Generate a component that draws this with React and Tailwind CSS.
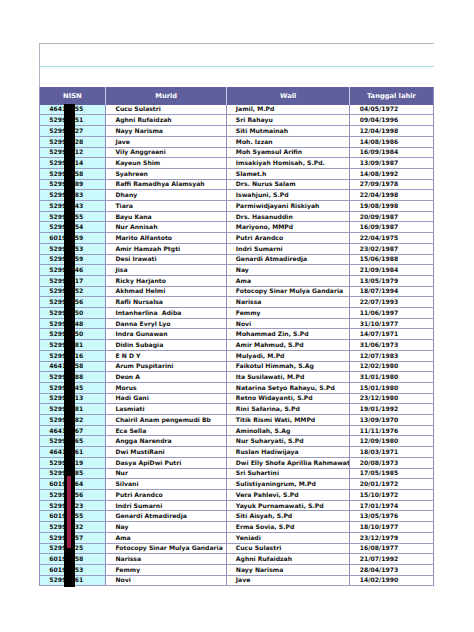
import React from "react";

const rows = [
  ["4641", "55", "Cucu Sulastri", "Jamil, M.Pd", "04/05/1972"],
  ["5299", "51", "Aghni Rufaidzah", "Sri Rahayu", "09/04/1996"],
  ["5299", "27", "Nayy Narisma", "Siti Mutmainah", "12/04/1998"],
  ["5299", "28", "Jave", "Moh. Izzan", "14/08/1986"],
  ["5299", "12", "Vily Anggraeni", "Moh Syamsul Arifin", "16/09/1984"],
  ["5299", "14", "Kayeun Shim", "Imsakiyah Homisah, S.Pd.", "13/09/1987"],
  ["5299", "58", "Syahreen", "Slamet.h", "14/08/1992"],
  ["5299", "89", "Raffi Ramadhya Alamsyah", "Drs. Nurus Salam", "27/09/1978"],
  ["5299", "83", "Dhany", "Iswahjuni, S.Pd", "22/04/1998"],
  ["5299", "43", "Tiara", "Parmiwidjayani Riskiyah", "19/08/1998"],
  ["5299", "55", "Bayu Kana", "Drs. Hasanuddin", "20/09/1987"],
  ["5299", "54", "Nur Annisah", "Mariyono, MMPd", "16/09/1987"],
  ["6019", "59", "Marito Alfantoto", "Putri Arandco", "22/04/1975"],
  ["5299", "53", "Amir Hamzah Ptgti", "Indri Sumarni", "23/02/1987"],
  ["5299", "59", "Desi Irawati", "Genardi Atmadiredja", "15/06/1988"],
  ["5299", "46", "Jisa", "Nay", "21/09/1984"],
  ["5299", "17", "Ricky Harjanto", "Ama", "13/05/1979"],
  ["5299", "52", "Akhmad Helmi", "Fotocopy Sinar Mulya Gandaria", "18/07/1994"],
  ["5299", "56", "Rafli Nursalsa", "Narissa", "22/07/1993"],
  ["5299", "50", "Intanherlina\u00a0 Adiba", "Femmy", "11/06/1997"],
  ["5299", "48", "Danna Evryl Lyo", "Novi", "31/10/1977"],
  ["5299", "50", "Indra Gunawan", "Mohammad Zin, S.Pd", "14/07/1971"],
  ["5299", "81", "Didin Subagia", "Amir Mahmud, S.Pd", "31/06/1973"],
  ["5299", "16", "E N D Y", "Mulyadi, M.Pd", "12/07/1983"],
  ["4641", "58", "Arum Puspitarini", "Faikotul Himmah, S.Ag", "12/02/1980"],
  ["5299", "88", "Deon A", "Ita Susilawati, M.Pd", "31/01/1980"],
  ["5299", "45", "Morus", "Natarina Setyo Rahayu, S.Pd", "15/01/1980"],
  ["5299", "13", "Hadi Gani", "Retno Widayanti, S.Pd", "23/12/1980"],
  ["5299", "81", "Lasmiati", "Rini Safarina, S.Pd", "19/01/1992"],
  ["5299", "82", "Chairil Anam pengemudi Bb", "Titik Rismi Wati, MMPd", "13/09/1970"],
  ["4641", "67", "Eca Sella", "Aminollah, S.Ag", "11/11/1976"],
  ["5299", "65", "Angga Narendra", "Nur Suharyati, S.Pd", "12/09/1980"],
  ["4641", "61", "Dwi MustiRani", "Ruslan Hadiwijaya", "18/03/1971"],
  ["5299", "19", "Dasya ApiDwi Putri", "Dwi Elly Shofa Aprillia Rahmawat", "20/08/1973"],
  ["5299", "85", "Nur", "Sri Suhartini", "17/05/1985"],
  ["6019", "64", "Silvani", "Sulistiyaningrum, M.Pd", "20/01/1972"],
  ["5299", "56", "Putri Arandco", "Vera Pahlevi, S.Pd", "15/10/1972"],
  ["5299", "23", "Indri Sumarni", "Yayuk Purnamawati, S.Pd", "17/01/1974"],
  ["6019", "55", "Genardi Atmadiredja", "Siti Aisyah, S.Pd", "13/05/1976"],
  ["5299", "32", "Nay", "Erma Sovia, S.Pd", "18/10/1977"],
  ["5299", "57", "Ama", "Yeniadi", "23/12/1979"],
  ["5299", "25", "Fotocopy Sinar Mulya Gandaria", "Cucu Sulastri", "16/08/1977"],
  ["6019", "58", "Narissa", "Aghni Rufaidzah", "21/07/1992"],
  ["6019", "53", "Femmy", "Nayy Narisma", "28/04/1973"],
  ["5299", "61", "Novi", "Jave", "14/02/1990"],
];

export default function App() {
  return (
    <div
      className="relative w-[474px] h-[632px] bg-white overflow-hidden"
      style={{ fontFamily: '"DejaVu Sans", Verdana, sans-serif' }}
    >
      <div className="ml-[38.5px] pt-[42.5px] w-[395px]">
        <div className="h-[23.5px] border-t border-l border-[#b4b4c4]" />
        <div className="h-[20.7px] border-t border-l border-t-[#a6dfe6] border-l-[#b4b4c4]" />
        <div className="border-l border-[#8e8ebe]">
          <div className="flex h-[18px] bg-[#5f5f9e] text-white font-bold text-[6.7px]">
            <div className="w-[66.8px] flex items-center justify-center border-r border-[#c8c8e4]">NISN</div>
            <div className="w-[121.4px] flex items-center justify-center border-r border-[#c8c8e4]">Murid</div>
            <div className="w-[123.3px] flex items-center justify-center border-r border-[#c8c8e4]">Wali</div>
            <div className="w-[83.5px] flex items-center justify-center border-r border-[#8e8ebe]">Tanggal lahir</div>
          </div>
          {rows.map((r, i) => (
            <div
              key={i}
              className="flex h-[10.71px] border-b border-[#9c9cc6] text-[6.1px] font-bold text-[#111] leading-none"
            >
              <div className="w-[66.8px] flex items-center pl-[9.8px] bg-[#ccfafc] border-r border-[#8e8ebe] whitespace-pre">
                {r[0] + "    " + r[1]}
              </div>
              <div className="w-[121.4px] flex items-center pl-[9.3px] border-r border-[#8e8ebe] whitespace-pre overflow-hidden">
                {r[2]}
              </div>
              <div className="w-[123.3px] flex items-center pl-[8.6px] border-r border-[#8e8ebe] whitespace-pre overflow-hidden">
                {r[3]}
              </div>
              <div className="w-[83.5px] flex items-center pl-[9.6px] border-r border-[#8e8ebe]">
                {r[4]}
              </div>
            </div>
          ))}
        </div>
      </div>
      <div className="absolute left-[64.3px] top-[104px] w-[10.4px] h-[483px] bg-[#050203]">
        <div className="absolute left-[3.2px] top-[372px] w-[4px] h-[72px] bg-[#9a1f45] blur-[0.6px]" />
      </div>
    </div>
  );
}
